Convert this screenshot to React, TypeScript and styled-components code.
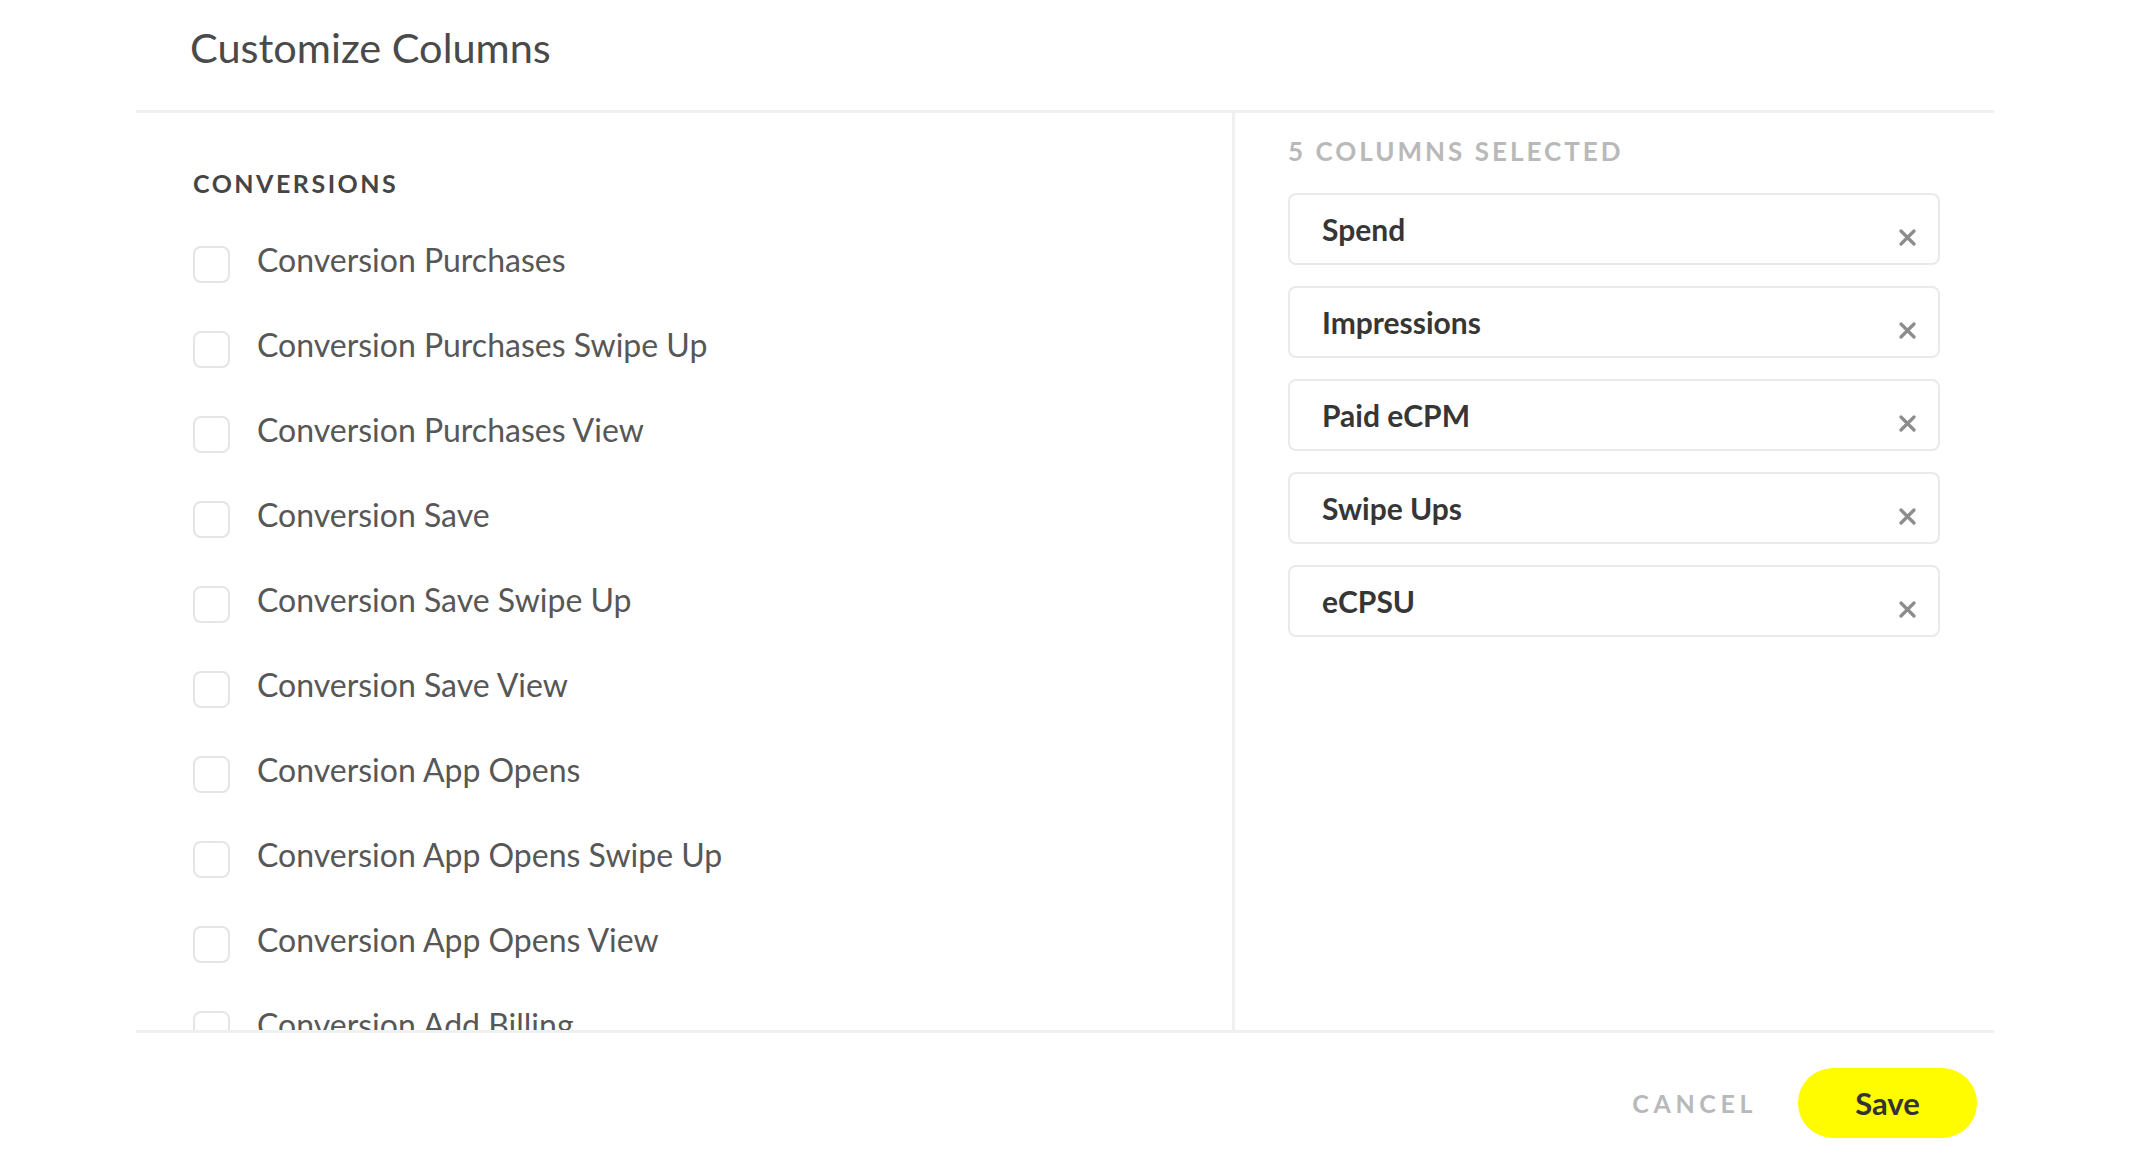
import React, { useState } from 'react';
import styled, { createGlobalStyle } from 'styled-components';

const GlobalStyle = createGlobalStyle`
  html, body {
    margin: 0;
    padding: 0;
    background: #fff;
  }
  body {
    font-family: Lato, "Noto Sans", "Liberation Sans", sans-serif;
  }
  * {
    box-sizing: border-box;
  }
`;

// --- Layout ---
const Page = styled.div`
  width: 100%;
  height: 100vh;
  display: flex;
  justify-content: center;
  background: #fff;
  overflow: hidden;
`;

const Modal = styled.div`
  width: 1858px;
  display: flex;
  flex-direction: column;
`;

const Header = styled.header`
  height: 113px;
  padding: 26px 0 0 54px;
  border-bottom: 3px solid #eef0f2;
`;

const Title = styled.h1`
  margin: 0;
  font-size: 41.5px;
  line-height: 42px;
  font-weight: 400;
  color: #4a4a4a;
`;

const Body = styled.div`
  height: 917px;
  display: grid;
  grid-template-columns: 1096px 1fr;
`;

const LeftPane = styled.section`
  padding: 58px 0 0 57px;
  overflow-y: auto;
  scrollbar-width: none;
  &::-webkit-scrollbar {
    display: none;
  }
`;

const RightPane = styled.section`
  padding: 25px 54px 0 53px;
  border-left: 3px solid #eef0f2;
`;

const SectionTitle = styled.h2`
  margin: 0 0 21px;
  font-size: 25px;
  line-height: 25px;
  font-weight: 700;
  letter-spacing: 2.5px;
  color: #454545;
`;

// --- Lista de columnas disponibles ---
const Row = styled.label`
  height: 85px;
  display: flex;
  align-items: center;
  gap: 27px;
  cursor: pointer;
`;

const Box = styled.span<{ $checked: boolean }>`
  width: 37px;
  height: 37px;
  flex-shrink: 0;
  margin-top: 9px;
  border: 2px solid ${(p) => (p.$checked ? '#0fadff' : '#e3e5e7')};
  border-radius: 8px;
  background: ${(p) => (p.$checked ? '#0fadff' : '#fff')};
`;

const HiddenInput = styled.input`
  display: none;
`;

const RowLabel = styled.span`
  font-size: 32px;
  line-height: 32px;
  font-weight: 400;
  color: #575757;
`;

// --- Columnas seleccionadas ---
const SelectedTitle = styled.div`
  margin-bottom: 29px;
  font-size: 26px;
  line-height: 26px;
  font-weight: 700;
  letter-spacing: 3px;
  color: #b9b9b9;
`;

const ChipList = styled.div`
  display: flex;
  flex-direction: column;
  gap: 21px;
`;

const Chip = styled.div`
  height: 72px;
  display: flex;
  align-items: center;
  justify-content: space-between;
  padding: 0 22px 0 32px;
  border: 2px solid #e8eaec;
  border-radius: 8px;
  background: #fff;
`;

const ChipText = styled.span`
  font-size: 30px;
  line-height: 30px;
  font-weight: 700;
  color: #363636;
`;

const RemoveButton = styled.button`
  width: 17px;
  height: 17px;
  margin-top: 16px;
  padding: 0;
  border: none;
  background: none;
  cursor: pointer;
  display: flex;
`;

// --- Footer ---
const Footer = styled.footer`
  flex: 1;
  display: flex;
  justify-content: flex-end;
  align-items: flex-start;
  gap: 41px;
  padding: 35px 17px 0 0;
  border-top: 3px solid #eef0f2;
`;

const CancelButton = styled.button`
  height: 70px;
  padding: 0;
  border: none;
  background: none;
  font-family: inherit;
  font-size: 25px;
  font-weight: 700;
  letter-spacing: 4.6px;
  color: #b7b9bb;
  cursor: pointer;
`;

const SaveButton = styled.button`
  width: 179px;
  height: 70px;
  border: none;
  border-radius: 35px;
  background: #fffc00;
  font-family: inherit;
  font-size: 31px;
  font-weight: 700;
  color: #333;
  cursor: pointer;
`;

const available = [
  'Conversion Purchases',
  'Conversion Purchases Swipe Up',
  'Conversion Purchases View',
  'Conversion Save',
  'Conversion Save Swipe Up',
  'Conversion Save View',
  'Conversion App Opens',
  'Conversion App Opens Swipe Up',
  'Conversion App Opens View',
  'Conversion Add Billing',
];

const XIcon = () => (
  <svg width="17" height="17" viewBox="0 0 17 17">
    <path d="M2 2 L15 15 M15 2 L2 15" stroke="#8c8c8c" strokeWidth="3.2" strokeLinecap="round" />
  </svg>
);

const App: React.FC = () => {
  const [checked, setChecked] = useState<string[]>([]);
  const [selected, setSelected] = useState(['Spend', 'Impressions', 'Paid eCPM', 'Swipe Ups', 'eCPSU']);

  const toggle = (name: string) =>
    setChecked((prev) => (prev.includes(name) ? prev.filter((n) => n !== name) : [...prev, name]));

  return (
    <>
      <GlobalStyle />
      <Page>
        <Modal>
          <Header>
            <Title>Customize Columns</Title>
          </Header>

          <Body>
            <LeftPane>
              <SectionTitle>CONVERSIONS</SectionTitle>
              {available.map((name) => (
                <Row key={name}>
                  <HiddenInput type="checkbox" checked={checked.includes(name)} onChange={() => toggle(name)} />
                  <Box $checked={checked.includes(name)} />
                  <RowLabel>{name}</RowLabel>
                </Row>
              ))}
            </LeftPane>

            <RightPane>
              <SelectedTitle>{selected.length} COLUMNS SELECTED</SelectedTitle>
              <ChipList>
                {selected.map((col) => (
                  <Chip key={col}>
                    <ChipText>{col}</ChipText>
                    <RemoveButton onClick={() => setSelected((s) => s.filter((c) => c !== col))}>
                      <XIcon />
                    </RemoveButton>
                  </Chip>
                ))}
              </ChipList>
            </RightPane>
          </Body>

          <Footer>
            <CancelButton>CANCEL</CancelButton>
            <SaveButton>Save</SaveButton>
          </Footer>
        </Modal>
      </Page>
    </>
  );
};

export default App;
